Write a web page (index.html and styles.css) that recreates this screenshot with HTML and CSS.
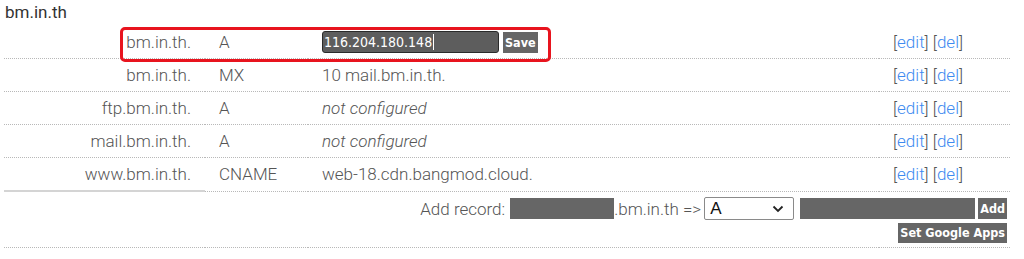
FILE: index.html
```html
<!DOCTYPE html>
<html>
<head>
<meta charset="utf-8">
<link rel="stylesheet" href="styles.css">
</head>
<body>
<div class="page">
  <div class="title">bm.in.th</div>
  <table class="records">
    <colgroup>
      <col class="c-name"><col class="c-type"><col class="c-value"><col class="c-act">
    </colgroup>
    <tr class="editing">
      <td class="name">bm.in.th.</td>
      <td class="type">A</td>
      <td class="value"><span class="edit-field"><input class="ip" type="text" value="116.204.180.148"><span class="caret"></span></span><button class="btn">Save</button></td>
      <td class="act">[<a href="#">edit</a>] [<a href="#">del</a>]</td>
    </tr>
    <tr>
      <td class="name">bm.in.th.</td>
      <td class="type">MX</td>
      <td class="value">10 mail.bm.in.th.</td>
      <td class="act">[<a href="#">edit</a>] [<a href="#">del</a>]</td>
    </tr>
    <tr>
      <td class="name">ftp.bm.in.th.</td>
      <td class="type">A</td>
      <td class="value"><em>not configured</em></td>
      <td class="act">[<a href="#">edit</a>] [<a href="#">del</a>]</td>
    </tr>
    <tr>
      <td class="name">mail.bm.in.th.</td>
      <td class="type">A</td>
      <td class="value"><em>not configured</em></td>
      <td class="act">[<a href="#">edit</a>] [<a href="#">del</a>]</td>
    </tr>
    <tr class="last">
      <td class="name">www.bm.in.th.</td>
      <td class="type">CNAME</td>
      <td class="value">web-18.cdn.bangmod.cloud.</td>
      <td class="act">[<a href="#">edit</a>] [<a href="#">del</a>]</td>
    </tr>
    <tr class="add">
      <td colspan="4">
        <div class="add-line">
          <span class="lbl">Add record:</span>
          <input class="gray host" type="text">
          <span class="lbl">.bm.in.th =&gt;</span>
          <span class="select">A<svg class="chev" width="12" height="8" viewBox="0 0 12 8"><path d="M1.5 1.5 L6 6 L10.5 1.5" fill="none" stroke="#222" stroke-width="1.8"/></svg></span>
          <input class="gray data" type="text">
          <button class="btn">Add</button>
        </div>
        <div class="add-line second">
          <button class="btn">Set Google Apps</button>
        </div>
      </td>
    </tr>
  </table>
  <div class="highlight"></div>
</div>
</body>
</html>
```

FILE: styles.css
```css
html, body {
  margin: 0;
  padding: 0;
  background: #fff;
}
.page {
  position: relative;
  padding: 0 14px 0 4px;
  font-family: Roboto, "Liberation Sans", sans-serif;
  font-weight: 300;
  font-size: 17px;
  color: #555;
}
.title {
  height: 26px;
  line-height: 24px;
  padding-left: 1px;
  color: #333;
  font-weight: 400;
}
.records {
  width: 1006px;
  border-collapse: collapse;
  table-layout: fixed;
}
.c-name { width: 201px; }
.c-type { width: 103px; }
.c-value { width: 571px; }
.c-act { width: 131px; }
.records td {
  height: 32px;
  padding: 0;
  border-bottom: 1px dotted #b8b8b8;
  vertical-align: middle;
  white-space: nowrap;
}
.records td.name {
  text-align: right;
  padding-right: 14px;
}
.records td.type {
  padding-left: 14px;
}
.records td.value {
  padding-left: 14px;
}
.records td.act {
  padding-left: 14px;
}
.records em {
  font-style: italic;
}
.records tr.last td.name {
  border-bottom: 2px solid #d4d4d4;
}
.act a {
  color: #3d8af0;
  text-decoration: none;
}
.edit-field {
  position: relative;
  display: inline-block;
  vertical-align: middle;
}
.ip {
  box-sizing: border-box;
  width: 177px;
  height: 22px;
  margin: 0;
  padding: 0 1px;
  background: #5d5d5d;
  border: 1px solid #2a2a2a;
  border-radius: 3px;
  color: #fff;
  font-family: "DejaVu Sans Condensed", "DejaVu Sans", sans-serif;
  font-size: 14px;
  outline: none;
  display: block;
}
.caret {
  position: absolute;
  left: 111px;
  top: 3px;
  width: 1px;
  height: 16px;
  background: #fff;
}
.btn {
  display: inline-block;
  vertical-align: middle;
  margin: 0;
  padding: 0 2px;
  height: 21px;
  background: #666;
  border: none;
  border-radius: 0;
  color: #fff;
  font-family: "DejaVu Sans Condensed", "DejaVu Sans", sans-serif;
  font-weight: bold;
  font-size: 12.5px;
  line-height: 21px;
}
.value .btn {
  margin-left: 4px;
}
.records tr.add td {
  height: auto;
  padding: 5px 3px 4px 0;
  text-align: right;
}
.add-line {
  display: flex;
  justify-content: flex-end;
  align-items: center;
  height: 23px;
}
.add-line.second {
  margin-top: 3px;
  height: 20px;
}
.add-line.second .btn {
  height: 20px;
  line-height: 20px;
}
.lbl {
  color: #555;
}
.add-line .lbl:first-child {
  margin-right: 5px;
}
.gray {
  box-sizing: border-box;
  height: 21px;
  margin: 0;
  padding: 0;
  background: #666;
  border: none;
  border-radius: 0;
  outline: none;
}
.host { width: 104px; }
.data { width: 175px; margin-left: 6px; margin-right: 3px; }
.select {
  box-sizing: border-box;
  display: flex;
  align-items: center;
  justify-content: space-between;
  width: 90px;
  height: 23px;
  margin-left: 3px;
  padding: 0 9px 0 5px;
  border: 1px solid #8a8a8a;
  border-radius: 2px;
  background: #fff;
  color: #111;
  font-family: "Liberation Sans", Arial, sans-serif;
  font-weight: 400;
  font-size: 17px;
}
.highlight {
  position: absolute;
  left: 120px;
  top: 27px;
  width: 431px;
  height: 35px;
  box-sizing: border-box;
  border: 3px solid #e8141e;
  border-radius: 5px;
  pointer-events: none;
}
```
